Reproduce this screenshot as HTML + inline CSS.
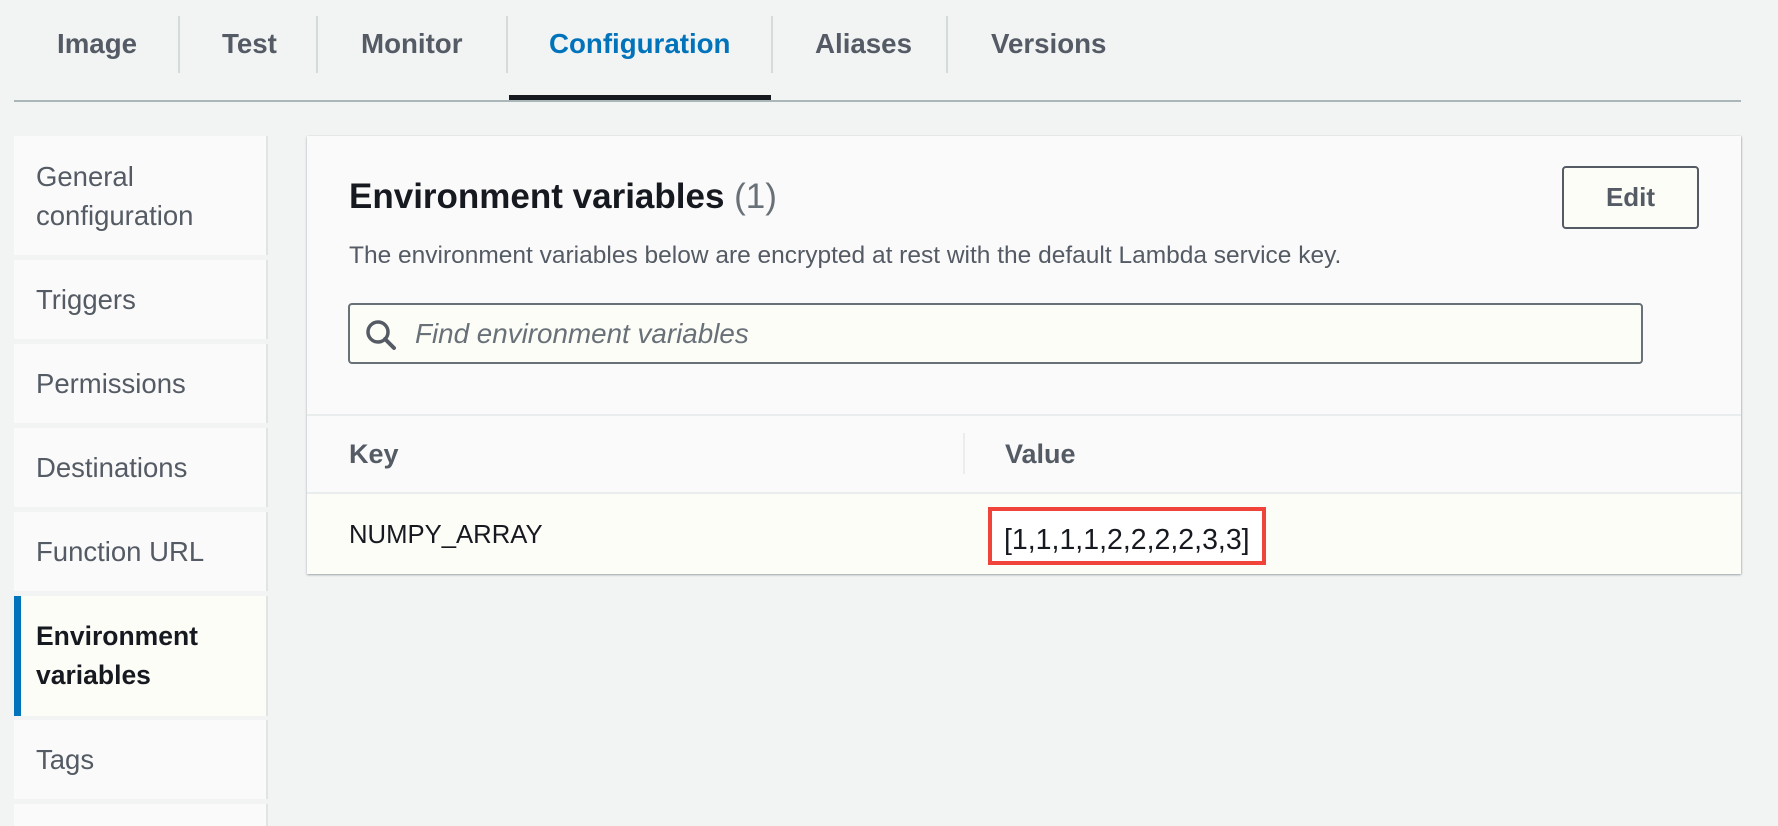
<!DOCTYPE html>
<html><head><meta charset="utf-8"><style>
*{box-sizing:border-box;margin:0;padding:0}
html{width:1778px;height:826px;overflow:hidden}
body{width:1778px;height:826px;background:#f2f3f3;font-family:"Liberation Sans",sans-serif;position:relative;overflow:hidden;color:#16191f}
.a{position:absolute;white-space:nowrap}
.tab{position:absolute;top:28px;font-size:27.7px;font-weight:bold;color:#545b64}
.sep{position:absolute;top:16px;width:2px;height:57px;background:#d5dbdb}
.side{position:absolute;left:14px;width:254px;background:#fafafa;border-right:2px solid #e1e4e4;font-size:27.5px;color:#545b64;padding-left:22px;display:flex;align-items:center;line-height:39px}
</style></head><body>
<div class="tab" style="left:57px">Image</div>
<div class="tab" style="left:222px">Test</div>
<div class="tab" style="left:361px">Monitor</div>
<div class="tab" style="left:549px;color:#0073bb">Configuration</div>
<div class="tab" style="left:815px">Aliases</div>
<div class="tab" style="left:991px">Versions</div>
<div class="sep" style="left:178px"></div>
<div class="sep" style="left:316px"></div>
<div class="sep" style="left:506px"></div>
<div class="sep" style="left:771px"></div>
<div class="sep" style="left:946px"></div>
<div class="a" style="left:14px;top:100px;width:1727px;height:2px;background:#aab7b8"></div>
<div class="a" style="left:509px;top:95px;width:262px;height:5px;background:#16191f"></div>

<div class="side" style="top:136px;height:119px">General<br>configuration</div>
<div class="side" style="top:260px;height:79px">Triggers</div>
<div class="side" style="top:344px;height:79px">Permissions</div>
<div class="side" style="top:428px;height:79px">Destinations</div>
<div class="side" style="top:512px;height:79px">Function URL</div>
<div class="side" style="top:596px;height:120px;background:#fdfdf8;color:#16191f;font-weight:bold;font-size:26.5px">Environment<br>variables</div>
<div class="a" style="left:14px;top:596px;width:7px;height:120px;background:#0073bb"></div>
<div class="side" style="top:720px;height:79px">Tags</div>
<div class="side" style="top:804px;height:40px"></div>

<div class="a" style="left:307px;top:136px;width:1434px;height:438px;background:#fafafa;box-shadow:0 1px 2px rgba(0,28,36,.35),1px 0 1px rgba(0,28,36,.1)"></div>
<div class="a" style="left:349px;top:177px;font-size:35px;font-weight:bold">Environment variables <span style="font-weight:normal;color:#687078">(1)</span></div>
<div class="a" style="left:349px;top:242px;font-size:24.5px;color:#545b64">The environment variables below are encrypted at rest with the default Lambda service key.</div>
<div class="a" style="left:1562px;top:166px;width:137px;height:63px;border:2px solid #545b64;border-radius:4px;background:#fdfdf8;font-size:26px;font-weight:bold;color:#545b64;display:flex;align-items:center;justify-content:center">Edit</div>
<div class="a" style="left:348px;top:303px;width:1295px;height:61px;border:2px solid #687078;border-radius:4px;background:#fdfdf8"></div>
<svg class="a" style="left:364px;top:318px" width="34" height="34" viewBox="0 0 34 34"><circle cx="14" cy="14" r="10" fill="none" stroke="#545b64" stroke-width="3.5"/><path d="M21 21 L30 30" stroke="#545b64" stroke-width="4" stroke-linecap="round"/></svg>
<div class="a" style="left:415px;top:318px;font-size:27.8px;font-style:italic;color:#687078">Find environment variables</div>
<div class="a" style="left:307px;top:414px;width:1434px;height:2px;background:#eaeded"></div>
<div class="a" style="left:349px;top:439px;font-size:27px;font-weight:bold;color:#545b64">Key</div>
<div class="a" style="left:1005px;top:439px;font-size:27px;font-weight:bold;color:#545b64">Value</div>
<div class="a" style="left:963px;top:433px;width:2px;height:41px;background:#eaeded"></div>
<div class="a" style="left:307px;top:492px;width:1434px;height:2px;background:#eaeded"></div>
<div class="a" style="left:307px;top:494px;width:1434px;height:80px;background:#fdfdf8"></div>
<div class="a" style="left:349px;top:521px;font-size:25.7px">NUMPY_ARRAY</div>
<div class="a" style="left:988px;top:507px;width:278px;height:58px;border:4px solid #f0443a;background:#fff"></div>
<div class="a" style="left:1004px;top:524px;font-size:28.5px">[1,1,1,1,2,2,2,2,3,3]</div>
</body></html>
